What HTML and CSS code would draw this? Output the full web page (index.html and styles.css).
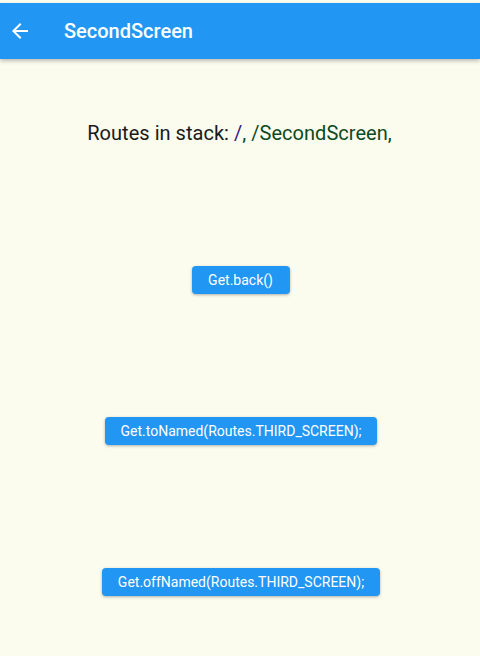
FILE: index.html
```html
<!DOCTYPE html>
<html>
<head>
<meta charset="utf-8">
<link rel="stylesheet" href="styles.css">
</head>
<body>
<div class="screen">
  <header class="appbar">
    <svg class="back" viewBox="0 0 24 24" width="24" height="24"><path d="M20 11H7.83l5.59-5.59L12 4l-8 8 8 8 1.41-1.41L7.83 13H20v-2z" fill="#fff"/></svg>
    <span class="title">SecondScreen</span>
  </header>
  <main class="content">
    <p class="routes">Routes in stack: <span class="r1">/</span><span class="r2">, /SecondScreen,</span></p>
    <button class="btn b1">Get.back()</button>
    <button class="btn b2">Get.toNamed(Routes.THIRD_SCREEN);</button>
    <button class="btn b3">Get.offNamed(Routes.THIRD_SCREEN);</button>
  </main>
</div>
</body>
</html>
```
FILE: styles.css
```css
html, body {
  margin: 0;
  padding: 0;
  background: #fbfbee;
  font-family: Roboto, "Liberation Sans", sans-serif;
}
.screen {
  width: 480px;
  height: 656px;
  padding-top: 3px;
  box-sizing: border-box;
  overflow: hidden;
}
.appbar {
  height: 56px;
  background: #2196f3;
  display: flex;
  align-items: center;
  box-shadow: 0 2px 4px rgba(0,0,0,0.25);
}
.back {
  margin-left: 8px;
  margin-right: 32px;
}
.title {
  color: #fff;
  font-size: 20px;
  font-weight: 500;
}
.content {
  display: flex;
  flex-direction: column;
  align-items: center;
  padding-left: 2px;
}
.routes {
  margin: 62px 3px 0 0;
  font-size: 20px;
  line-height: 24px;
  color: #1a1a1a;
  letter-spacing: 0.03px;
}
.r1 { color: #3b1687; }
.r2 { color: #0b4a1e; }
.btn {
  border: none;
  border-radius: 4px;
  background: #2196f3;
  color: #fff;
  font-family: Roboto, "Liberation Sans", sans-serif;
  font-size: 14px;
  height: 28px;
  padding: 0 16px;
  box-shadow: 0 1px 3px rgba(0,0,0,0.3);
}
.b1 { margin-top: 121px; padding: 0 17px 0 16px; }
.b2 { margin-top: 123px; }
.b3 { margin-top: 123px; }
```
